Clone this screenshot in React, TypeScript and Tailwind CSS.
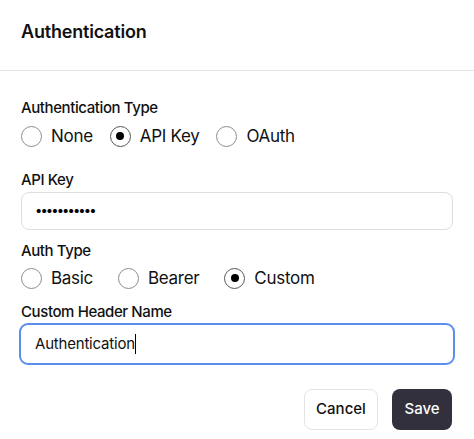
import React from 'react';

const Radio = ({ label, checked }: { label: string; checked?: boolean }) => {
  return (
    <div className="flex items-center gap-[9px]">
      <span
        className={`w-[21px] h-[21px] rounded-full border flex items-center justify-center ${
          checked ? 'border-[#555]' : 'border-[#8c8c8c]'
        }`}
      >
        {checked && <span className="w-[8px] h-[8px] rounded-full bg-black" />}
      </span>
      <span className="text-[17px] leading-[24px] tracking-[-0.3px] text-[#111]">{label}</span>
    </div>
  );
};

const App = () => {
  return (
    <div className="w-[474px] h-[439px] bg-white font-['Inter',sans-serif] text-[#111]">
      <div className="h-[71px] border-b border-[#e2e2e2] flex items-center px-[21px] pb-[7px]">
        <h1 className="text-[18px] font-semibold tracking-[-0.2px]">Authentication</h1>
      </div>
      <div className="px-[21px] pt-[27px] flex flex-col">
        <p className="text-[15px] leading-[20px] font-medium tracking-[-0.4px]">Authentication Type</p>
        <div className="flex items-center gap-[17px] mt-[6px] h-[24px]">
          <Radio label="None" />
          <Radio label="API Key" checked />
          <Radio label="OAuth" />
        </div>

        <p className="text-[15px] leading-[20px] font-medium tracking-[-0.4px] mt-[22px]">API Key</p>
        <div className="mt-[2px] h-[38px] border border-[#dedede] rounded-[8px] flex items-center px-[13px]">
          <span className="text-[13px] tracking-[-1.9px] text-black">•••••••••••</span>
        </div>

        <p className="text-[15px] leading-[20px] font-medium tracking-[-0.4px] mt-[11px]">Auth Type</p>
        <div className="flex items-center gap-[25px] mt-[5px] h-[24px]">
          <Radio label="Basic" />
          <Radio label="Bearer" />
          <Radio label="Custom" checked />
        </div>

        <p className="text-[15px] leading-[20px] font-medium tracking-[-0.4px] mt-[12px]">Custom Header Name</p>
        <div className="mt-[1px] -mx-[2px] h-[42px] border-2 border-[#5b8def] rounded-[9px] flex items-center px-[14px]">
          <span className="text-[15px] tracking-[-0.2px] text-[#111]">Authentication</span>
          <span className="w-[1px] h-[20px] bg-black" />
        </div>

        <div className="flex justify-end gap-[14px] mt-[24px] pr-[1px]">
          <button className="h-[41px] w-[74px] rounded-[8px] border border-[#e4e4e4] bg-white text-[15px] font-medium text-[#111]">
            Cancel
          </button>
          <button className="h-[41px] w-[60px] rounded-[8px] bg-[#31303c] text-[15px] font-medium text-white">
            Save
          </button>
        </div>
      </div>
    </div>
  );
};

export default App;
